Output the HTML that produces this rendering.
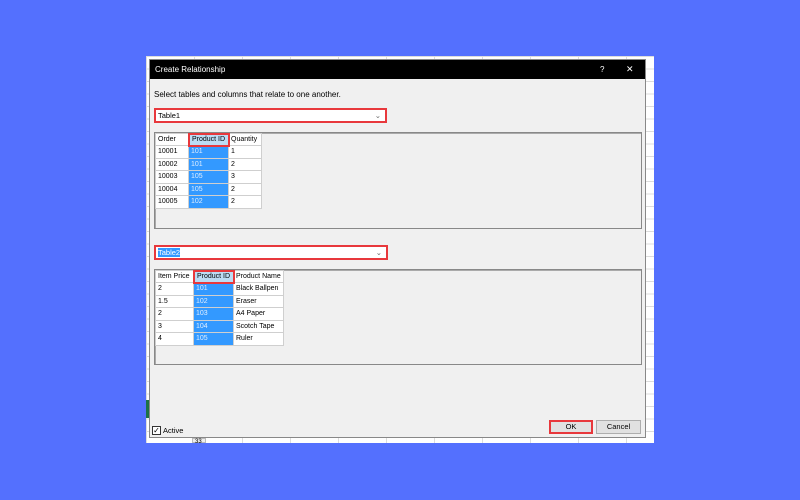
<!DOCTYPE html>
<html><head><style>
*{margin:0;padding:0;box-sizing:border-box}
body{width:800px;height:500px;background:#5470fe;position:relative;overflow:hidden;font-family:"Liberation Sans",sans-serif;font-size:8px;color:#000}
.abs{position:absolute}
.xl{left:146px;top:56px;width:508px;height:387px;background:#fff;
background-image:linear-gradient(#dcdcdc 1px,transparent 1px),linear-gradient(90deg,#dcdcdc 1px,transparent 1px);background-size:100% 12.5px,48px 100%}
.dlg{left:149px;top:59px;width:497px;height:379px;background:#f0f0f0;border:1px solid #888}
.title{left:0;top:0;width:495px;height:19px;background:#000;color:#fff;font-size:8px;line-height:19px;padding-left:5px}
.dd{background:#fff;border:2px solid #e8383c;height:15px;font-size:7.5px;line-height:11px;padding-left:2px}
.box{border:1px solid #888;box-shadow:inset 1px 1px 0 #aaa;background:#f0f0f0}
table{position:absolute;border-collapse:collapse;font-size:7px}
td{border:1px solid #cfcfcf;background:#fff;height:12.5px;padding:0 2px;white-space:nowrap}
td.s{background:#3399ff;color:#dfeeff}
th{font-weight:normal;border:1px solid #cfcfcf;background:#fff;height:12px;padding:0 2px;text-align:left}
th.h{background:#bcdcf4;outline:2px solid #e8383c;outline-offset:-1px;text-align:center}
.btn{border:1px solid #adadad;background:#e1e1e1;height:14px;text-align:center;line-height:12px;font-size:7.5px}
</style></head><body>
<div class="abs xl"></div>
<div class="abs" style="left:146px;top:400px;width:4px;height:18px;background:#1e7145"></div>
<div class="abs" style="left:192px;top:438px;width:14px;height:5px;font-size:6px;line-height:6px;border:1px solid #bbb;background:#eee;padding-left:2px">33</div>
<div class="abs dlg">
 <div class="abs title">Create Relationship<span class="abs" style="left:450px;top:0">?</span><span class="abs" style="left:476px;top:0;font-size:9px">✕</span></div>
 <div class="abs" style="left:4px;top:30px;font-size:8px">Select tables and columns that relate to one another.</div>
 <div class="abs dd" style="left:4px;top:48px;width:233px">Table1<span class="abs" style="right:4px;top:0;color:#666">⌄</span></div>
 <div class="abs box" style="left:4px;top:72px;width:488px;height:97px">
  <table style="left:0;top:0"><tr><th style="width:33px">Order</th><th class="h" style="width:40px">Product ID</th><th style="width:33px">Quantity</th></tr>
  <tr><td>10001</td><td class="s">101</td><td>1</td></tr>
  <tr><td>10002</td><td class="s">101</td><td>2</td></tr>
  <tr><td>10003</td><td class="s">105</td><td>3</td></tr>
  <tr><td>10004</td><td class="s">105</td><td>2</td></tr>
  <tr><td>10005</td><td class="s">102</td><td>2</td></tr></table>
 </div>
 <div class="abs dd" style="left:4px;top:185px;width:234px"><span style="background:#3399ff;color:#fff">Table2</span><span class="abs" style="right:4px;top:0;color:#666">⌄</span></div>
 <div class="abs box" style="left:4px;top:209px;width:488px;height:96px">
  <table style="left:0;top:0"><tr><th style="width:38px">Item Price</th><th class="h" style="width:40px">Product ID</th><th style="width:50px">Product Name</th></tr>
  <tr><td>2</td><td class="s">101</td><td>Black Ballpen</td></tr>
  <tr><td>1.5</td><td class="s">102</td><td>Eraser</td></tr>
  <tr><td>2</td><td class="s">103</td><td>A4 Paper</td></tr>
  <tr><td>3</td><td class="s">104</td><td>Scotch Tape</td></tr>
  <tr><td>4</td><td class="s">105</td><td>Ruler</td></tr></table>
 </div>
 <div class="abs" style="left:2px;top:366px;width:9px;height:9px;border:1px solid #333;background:#fff;font-size:8px;line-height:7px;text-align:center">✓</div>
 <div class="abs" style="left:13px;top:366px;font-size:7.5px">Active</div>
 <div class="abs btn" style="left:399px;top:360px;width:44px;border:2px solid #e8383c;line-height:10px">OK</div>
 <div class="abs btn" style="left:446px;top:360px;width:45px">Cancel</div>
</div>
</body></html>
